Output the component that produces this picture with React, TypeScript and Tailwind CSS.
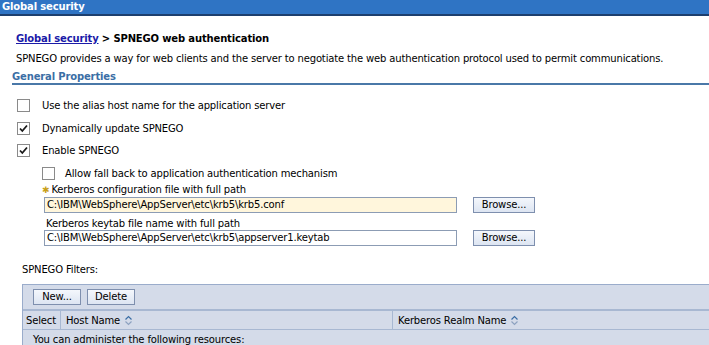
const font = { fontFamily: '"DejaVu Sans", Verdana, sans-serif', letterSpacing: '-0.15px' };

function Check({ checked }: { checked?: boolean }) {
  return (
    <span className="inline-flex h-[13px] w-[13px] shrink-0 items-center justify-center border border-[#8a8a8a] bg-white">
      {checked && (
        <svg width="11" height="11" viewBox="0 0 11 11">
          <path d="M2 5.5 L4.3 8 L9 2.5" fill="none" stroke="#1a1a1a" strokeWidth="1.8" />
        </svg>
      )}
    </span>
  );
}

function Btn({ children, w }: { children: string; w: string }) {
  return (
    <button className={`h-[16px] ${w} border border-[#7e8fae] bg-gradient-to-b from-[#f4f7fc] to-[#dde5f2] text-[10px] leading-none text-black`}>
      {children}
    </button>
  );
}

function SortIcon() {
  return (
    <svg width="9" height="11" viewBox="0 0 9 11" className="ml-1">
      <path d="M1.5 4.5 L4.5 1.5 L7.5 4.5" fill="none" stroke="#3b6ea5" strokeWidth="1.2" />
      <path d="M1.5 6.5 L4.5 9.5 L7.5 6.5" fill="none" stroke="#8da2c0" strokeWidth="1.2" />
    </svg>
  );
}

export default function App() {
  return (
    <div className="h-[345px] w-[709px] overflow-hidden bg-white text-[10px] text-black" style={font}>
      <div className="h-[16px] border-b-2 border-[#1d3f6e] bg-[#2f74c4] pl-[2px] text-[10px] font-bold leading-[14px] text-white">
        Global security
      </div>

      <div className="pl-[16px] pt-[16px]">
        <div className="text-[10px] font-bold leading-[14px]">
          <a className="text-[#1a1aa8] underline">Global security</a> &gt; SPNEGO web authentication
        </div>
        <div className="mt-[6px] leading-[14px]">
          SPNEGO provides a way for web clients and the server to negotiate the web authentication protocol used to permit communications.
        </div>
      </div>

      <div className="ml-[12px] mt-[4px] border-b-2 border-[#4a78a8] text-[10px] font-bold leading-[13px] text-[#3b6ea5]">
        General Properties
      </div>

      <div className="flex flex-col pl-[17px] pt-[9px]">
        <label className="flex h-[23px] items-center gap-[12px]">
          <Check />
          <span>Use the alias host name for the application server</span>
        </label>
        <label className="flex h-[22px] items-center gap-[12px]">
          <Check checked />
          <span>Dynamically update SPNEGO</span>
        </label>
        <label className="flex h-[23px] items-center gap-[12px]">
          <Check checked />
          <span>Enable SPNEGO</span>
        </label>

        <div className="flex flex-col pl-[25px]">
          <label className="flex h-[22px] items-center gap-[10px]">
            <Check />
            <span>Allow fall back to application authentication mechanism</span>
          </label>

          <div className="flex items-center leading-[12px]">
            <span className="mr-[2px] text-[9px] text-[#c9a018]">✱</span>
            <span>Kerberos configuration file with full path</span>
          </div>
          <div className="mt-[1px] flex items-center gap-[16px] pl-[2px]">
            <div className="h-[16px] w-[413px] border border-[#8c9cb4] bg-[#fff6dc] pl-[2px] leading-[14px]">
              C:\IBM\WebSphere\AppServer\etc\krb5\krb5.conf
            </div>
            <Btn w="w-[62px]">Browse...</Btn>
          </div>

          <div className="mt-[5px] pl-[4px] leading-[12px]">Kerberos keytab file name with full path</div>
          <div className="flex items-center gap-[16px] pl-[2px]">
            <div className="h-[16px] w-[413px] border border-[#8c9cb4] bg-white pl-[2px] leading-[14px]">
              C:\IBM\WebSphere\AppServer\etc\krb5\appserver1.keytab
            </div>
            <Btn w="w-[62px]">Browse...</Btn>
          </div>
        </div>
      </div>

      <div className="pl-[22px] pt-[17px] leading-[13px]">SPNEGO Filters:</div>

      <div className="ml-[22px] mt-[8px] border-l border-t border-[#9aaccb] bg-[#d4dbe9]">
        <div className="flex h-[26px] items-center gap-[6px] border-b-2 border-[#a8b8d2] pl-[10px]">
          <Btn w="w-[48px]">New...</Btn>
          <Btn w="w-[48px]">Delete</Btn>
        </div>
        <div className="flex h-[19px] items-center border-b border-[#a8b8d2]">
          <div className="flex h-full w-[38px] items-center border-r border-[#a8b8d2] pl-[3px]">Select</div>
          <div className="flex h-full w-[332px] items-center border-r border-[#a8b8d2] pl-[5px]">
            Host Name <SortIcon />
          </div>
          <div className="flex h-full items-center pl-[5px]">
            Kerberos Realm Name <SortIcon />
          </div>
        </div>
        <div className="pl-[10px] pt-[3px] leading-[13px]">You can administer the following resources:</div>
      </div>
    </div>
  );
}
